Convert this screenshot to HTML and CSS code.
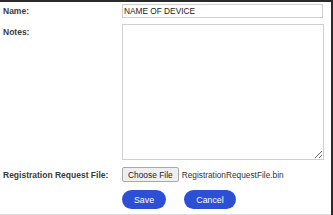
FILE: index.html
```html
<!DOCTYPE html>
<html>
<head>
<meta charset="utf-8">
<link rel="stylesheet" href="styles.css">
</head>
<body>
<div class="panel">
  <div class="row row-name">
    <label class="label">Name:</label>
    <input class="text-input" type="text" value="NAME OF DEVICE">
  </div>
  <div class="row row-notes">
    <label class="label label-top">Notes:</label>
    <textarea class="notes"></textarea>
  </div>
  <div class="row row-file">
    <label class="label">Registration Request File:</label>
    <div class="file">
      <button class="choose" type="button">Choose File</button>
      <span class="filename">RegistrationRequestFile.bin</span>
    </div>
  </div>
  <div class="row row-actions">
    <span class="label"></span>
    <div class="actions">
      <button class="btn btn-save" type="button">Save</button>
      <button class="btn btn-cancel" type="button">Cancel</button>
    </div>
  </div>
</div>
</body>
</html>
```

FILE: styles.css
```css
html, body {
  margin: 0;
  padding: 0;
  background: #2b2b2b;
}
body {
  width: 333px;
  height: 215px;
  overflow: hidden;
  font-family: "Liberation Sans", Arial, sans-serif;
  font-size: 8.3px;
}
.panel {
  margin-top: 2px;
  width: 331px;
  height: 213px;
  box-sizing: border-box;
  background: #fff;
  border-bottom: 1px solid #dcdcdc;
  padding: 2px 0 0 3px;
}
.row {
  display: flex;
  align-items: center;
}
.label {
  width: 119px;
  flex: none;
  font-weight: bold;
  color: #3a3a3a;
  font-size: 8.5px;
}
.label-top {
  align-self: flex-start;
  padding-top: 3px;
}
.text-input {
  width: 201px;
  height: 14px;
  box-sizing: border-box;
  margin: 0;
  border: 1px solid #cfcfcf;
  padding: 0 1px;
  font-family: "Liberation Sans", Arial, sans-serif;
  font-size: 8.3px;
  color: #222;
  outline: none;
}
.row-notes {
  margin-top: 6px;
}
.notes {
  width: 202px;
  height: 136px;
  box-sizing: border-box;
  margin: 0;
  border: 1px solid #d0d0d0;
  padding: 2px;
  display: block;
  resize: both;
}
.row-file {
  margin-top: 7px;
}
.file {
  display: flex;
  align-items: center;
}
.choose {
  height: 15px;
  box-sizing: border-box;
  margin: 0;
  padding: 0 5px;
  background: #efefef;
  border: 1px solid #a9a9a9;
  border-radius: 2px;
  font-family: "Liberation Sans", Arial, sans-serif;
  font-size: 8.4px;
  color: #222;
}
.filename {
  margin-left: 3px;
  color: #333;
}
.row-actions {
  margin-top: 8px;
}
.actions {
  display: flex;
  gap: 18px;
}
.btn {
  height: 19px;
  box-sizing: border-box;
  margin: 0;
  border: none;
  border-radius: 10px;
  background: #2d4fd6;
  color: #fff;
  font-family: "Liberation Sans", Arial, sans-serif;
  font-size: 8.8px;
  padding: 0;
}
.btn-save {
  width: 44px;
}
.btn-cancel {
  width: 52px;
}
```
